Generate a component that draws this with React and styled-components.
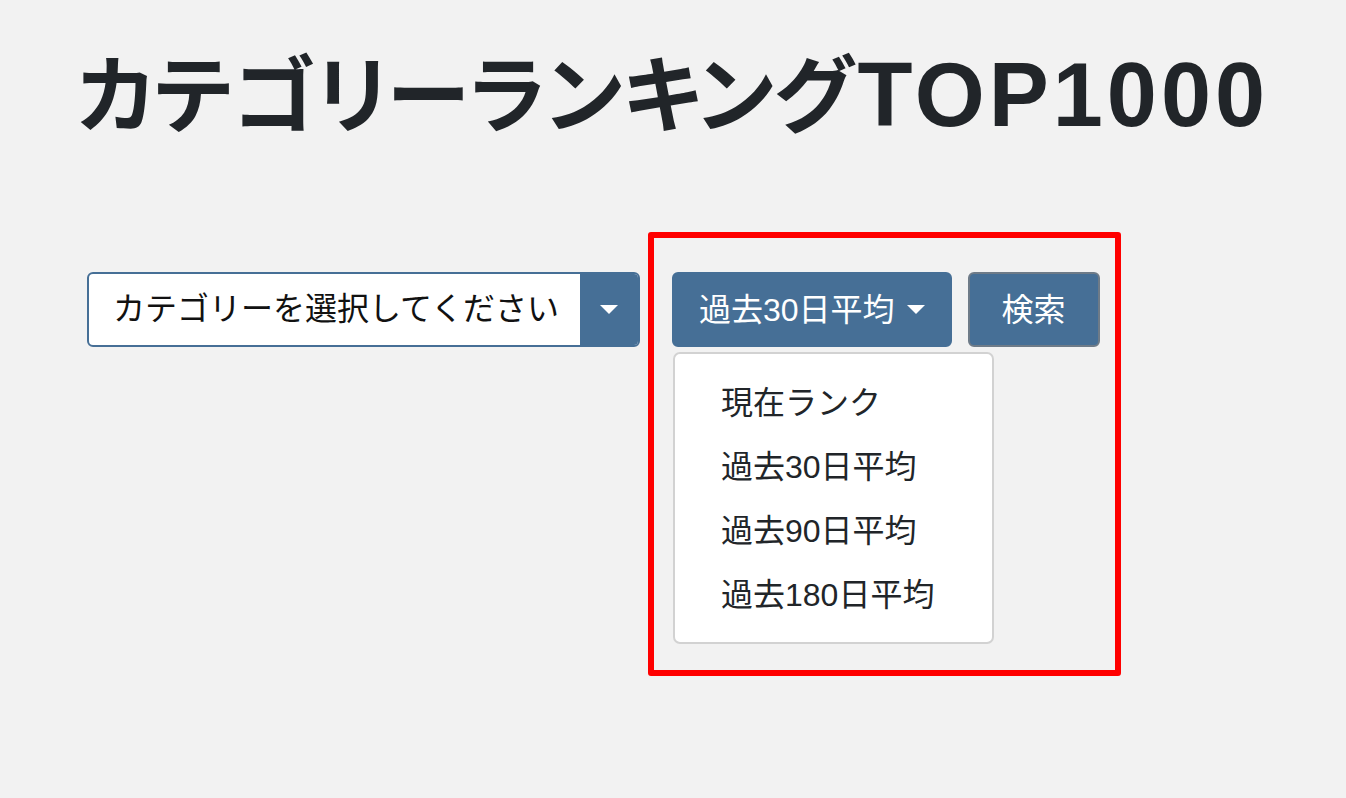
import React from 'react';
import styled, { createGlobalStyle } from 'styled-components';

const GlobalStyle = createGlobalStyle`
  html, body {
    margin: 0;
    padding: 0;
    background: #f2f2f2;
    font-family: "Liberation Sans", "Noto Sans CJK JP", sans-serif;
    color: #212529;
  }
`;

const Page = styled.div`
  width: 1346px;
  height: 798px;
  background: #f2f2f2;
  overflow: hidden;
`;

const Title = styled.h1`
  margin: 0;
  padding-top: 41px;
  text-align: center;
  font-family: "Noto Sans CJK JP", sans-serif;
  font-size: 84px;
  line-height: 98px;
  font-weight: 700;
  color: #212529;
  font-feature-settings: "palt";
`;

const Latin = styled.span`
  font-family: "Liberation Sans", sans-serif;
  font-size: 90px;
  letter-spacing: 4px;
  margin-left: 4px;
`;

const Controls = styled.div`
  display: flex;
  align-items: flex-start;
  padding-left: 87px;
  margin-top: 128px;
`;

const Select = styled.div`
  display: flex;
  width: 553px;
  height: 75px;
  box-sizing: border-box;
  border: 2px solid #466f96;
  border-radius: 6px;
  overflow: hidden;
  background: #fff;
`;

const SelectText = styled.div`
  flex: 1;
  padding-left: 24px;
  font-size: 32px;
  line-height: 71px;
  color: #111;
`;

const SelectArrow = styled.div`
  width: 58px;
  background: #466f96;
  display: flex;
  align-items: center;
  justify-content: center;
`;

const Caret = styled.span`
  display: inline-block;
  width: 0;
  height: 0;
  border-left: 9.6px solid transparent;
  border-right: 9.6px solid transparent;
  border-top: 9.6px solid #fff;
  margin-left: ${(p) => p.$gap || 0}px;
`;

const Group = styled.div`
  position: relative;
  display: flex;
  gap: 16px;
  margin-left: 32px;
`;

const Button = styled.button`
  display: flex;
  align-items: center;
  height: 75px;
  box-sizing: border-box;
  padding: 0 ${(p) => p.$pad}px;
  border: 2px solid ${(p) => p.$border};
  border-radius: 6px;
  background: #466f96;
  color: #fff;
  font-family: inherit;
  font-size: 32px;
  line-height: 48px;
`;

const Highlight = styled.div`
  position: absolute;
  left: -24px;
  top: -40px;
  width: 473px;
  height: 444px;
  box-sizing: border-box;
  border: 6px solid #ff0000;
  border-radius: 3px;
  pointer-events: none;
`;

const Menu = styled.ul`
  position: absolute;
  left: 1px;
  top: 80px;
  width: 321px;
  box-sizing: border-box;
  margin: 0;
  padding: 17px 0 15px;
  list-style: none;
  background: #fff;
  border: 2px solid #d2d2d2;
  border-radius: 7px;
`;

const MenuItem = styled.li`
  padding: 8px 46px;
  font-size: 32px;
  line-height: 48px;
  color: #212529;
`;

const options = ['現在ランク', '過去30日平均', '過去90日平均', '過去180日平均'];

const App = () => {
  return (
    <Page>
      <GlobalStyle />
      <Title>
        カテゴリーランキング<Latin>TOP1000</Latin>
      </Title>
      <Controls>
        <Select>
          <SelectText>カテゴリーを選択してください</SelectText>
          <SelectArrow>
            <Caret />
          </SelectArrow>
        </Select>
        <Group>
          <Button $pad={25} $border="#466f96">
            過去30日平均
            <Caret $gap={12} />
          </Button>
          <Button $pad={32} $border="#6e7b88">検索</Button>
          <Menu>
            {options.map((o) => (
              <MenuItem key={o}>{o}</MenuItem>
            ))}
          </Menu>
          <Highlight />
        </Group>
      </Controls>
    </Page>
  );
};

export default App;
